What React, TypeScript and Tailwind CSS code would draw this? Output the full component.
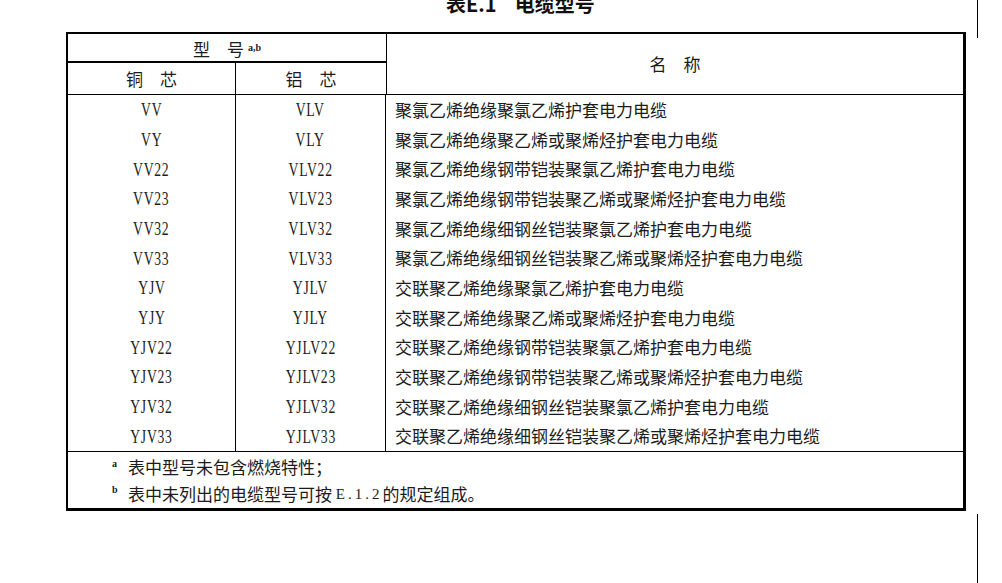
const rows: [string, string, string][] = [
  ["VV", "VLV", "聚氯乙烯绝缘聚氯乙烯护套电力电缆"],
  ["VY", "VLY", "聚氯乙烯绝缘聚乙烯或聚烯烃护套电力电缆"],
  ["VV22", "VLV22", "聚氯乙烯绝缘钢带铠装聚氯乙烯护套电力电缆"],
  ["VV23", "VLV23", "聚氯乙烯绝缘钢带铠装聚乙烯或聚烯烃护套电力电缆"],
  ["VV32", "VLV32", "聚氯乙烯绝缘细钢丝铠装聚氯乙烯护套电力电缆"],
  ["VV33", "VLV33", "聚氯乙烯绝缘细钢丝铠装聚乙烯或聚烯烃护套电力电缆"],
  ["YJV", "YJLV", "交联聚乙烯绝缘聚氯乙烯护套电力电缆"],
  ["YJY", "YJLY", "交联聚乙烯绝缘聚乙烯或聚烯烃护套电力电缆"],
  ["YJV22", "YJLV22", "交联聚乙烯绝缘钢带铠装聚氯乙烯护套电力电缆"],
  ["YJV23", "YJLV23", "交联聚乙烯绝缘钢带铠装聚乙烯或聚烯烃护套电力电缆"],
  ["YJV32", "YJLV32", "交联聚乙烯绝缘细钢丝铠装聚氯乙烯护套电力电缆"],
  ["YJV33", "YJLV33", "交联聚乙烯绝缘细钢丝铠装聚乙烯或聚烯烃护套电力电缆"],
];

// narrow serif type, like the song-face latin of the source document
const Code = ({ children }: { children: string }) => (
  <span className="inline-block scale-x-[0.72] text-[19px] leading-none tracking-[1px] [font-family:'Liberation_Serif',serif]">
    {children}
  </span>
);

export default function App() {
  return (
    <div className="w-[1002px] h-[583px] bg-white overflow-hidden flex text-[#1c1c1c] [font-family:'Noto_Sans_CJK_SC',sans-serif]">
      {/* page body */}
      <div className="w-[977px] flex flex-col">
        <div className="-mt-[6px] h-[20px] pl-[446px] text-[20px] leading-[20px] font-bold text-[#111] whitespace-pre">
          表E.1{"    "}电缆型号
        </div>

        <div className="ml-[66px] mt-[18px] w-[900px] border-l-2 border-t-2 border-r-[3px] border-b-[3px] border-black">
          {/* header */}
          <div className="flex border-b border-black">
            <div className="w-[319px] border-r border-black flex flex-col">
              <div className="h-[29px] border-b-2 border-black flex items-center justify-center text-[17px] leading-[20px]">
                <span className="mt-[2px]">
                  型　号
                  <sup className="ml-[4px] text-[10px] font-bold [font-family:'Liberation_Serif',serif]">a,b</sup>
                </span>
              </div>
              <div className="h-[31px] flex text-[17px]">
                <div className="w-[168px] border-r border-black flex items-center justify-center">铜　芯</div>
                <div className="flex-1 flex items-center justify-center">铝　芯</div>
              </div>
            </div>
            <div className="flex-1 flex items-center justify-center text-[17px]">名　称</div>
          </div>

          {/* body */}
          <div className="flex flex-col border-b border-black">
            {rows.map(([cu, al, name]) => (
              <div key={cu} className="h-[29.67px] flex">
                <div className="w-[168px] border-r border-black flex items-center justify-center">
                  <Code>{cu}</Code>
                </div>
                <div className="w-[150px] border-r border-black flex items-center justify-center">
                  <Code>{al}</Code>
                </div>
                <div className="flex-1 pl-[9px] flex items-center text-[17px] whitespace-nowrap">{name}</div>
              </div>
            ))}
          </div>

          {/* footnotes */}
          <div className="h-[56px] pt-[2px] pl-[44px] flex flex-col text-[17px] leading-[20px]">
            <div className="h-[27px] flex items-center">
              <span className="w-[16px] text-[10px] font-bold leading-none -mt-[6px] [font-family:'Liberation_Serif',serif]">a</span>
              <span>表中型号未包含燃烧特性；</span>
            </div>
            <div className="h-[27px] flex items-center whitespace-pre">
              <span className="w-[16px] text-[10px] font-bold leading-none -mt-[9px] [font-family:'Liberation_Serif',serif]">b</span>
              <span>表中未列出的电缆型号可按 </span>
              <span className="text-[15px] tracking-[3px] [font-family:'Liberation_Serif',serif]">E.1.2</span>
              <span>的规定组成。</span>
            </div>
          </div>
        </div>
      </div>

      {/* page edge marks */}
      <div className="w-px flex flex-col">
        <div className="h-[38px] bg-black" />
        <div className="mt-auto h-[69px] bg-black" />
      </div>
    </div>
  );
}
